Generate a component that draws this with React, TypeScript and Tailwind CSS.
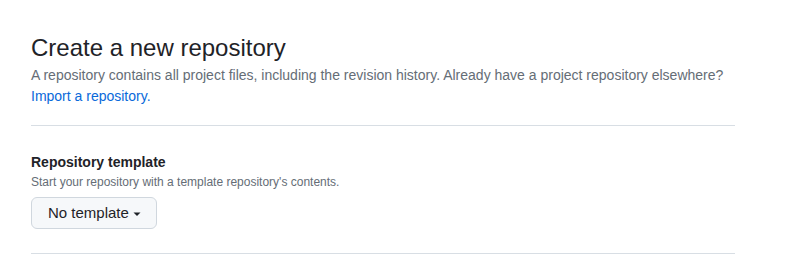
export default function App() {
  return (
    <div className="min-h-[259px] bg-white font-['Segoe_UI','Liberation_Sans',sans-serif] text-[#1f2328]">
      <div className="ml-[31px] w-[704px] pt-[33px]">
        <div className="border-b border-[#d8dee4] pb-[18px]">
          <h1 className="text-[24px] font-normal leading-[30px]">Create a new repository</h1>
          <p className="mt-[2px] text-[14px] leading-[21px] text-[#656d76]">
            A repository contains all project files, including the revision history. Already have a project repository elsewhere?
            <br />
            <a href="#" className="text-[#0969da]">Import a repository.</a>
          </p>
        </div>
        <div className="border-b border-[#d8dee4] pb-[24px] pt-[26px]">
          <h2 className="text-[14px] font-semibold leading-[21px]">Repository template</h2>
          <p className="text-[12px] leading-[18px] text-[#656d76]">
            Start your repository with a template repository's contents.
          </p>
          <button className="mt-[6px] flex h-[32px] items-center gap-[4px] rounded-[6px] border border-[#d0d7de] bg-[#f6f8fa] pl-[16px] pr-[15px] text-[15px] font-medium leading-[20px]">
            No template
            <svg width="8" height="8" viewBox="0 0 8 8" className="mt-[1px]">
              <path d="M0.5 2.5 L7.5 2.5 L4 6 Z" fill="#1f2328" />
            </svg>
          </button>
        </div>
      </div>
    </div>
  );
}
